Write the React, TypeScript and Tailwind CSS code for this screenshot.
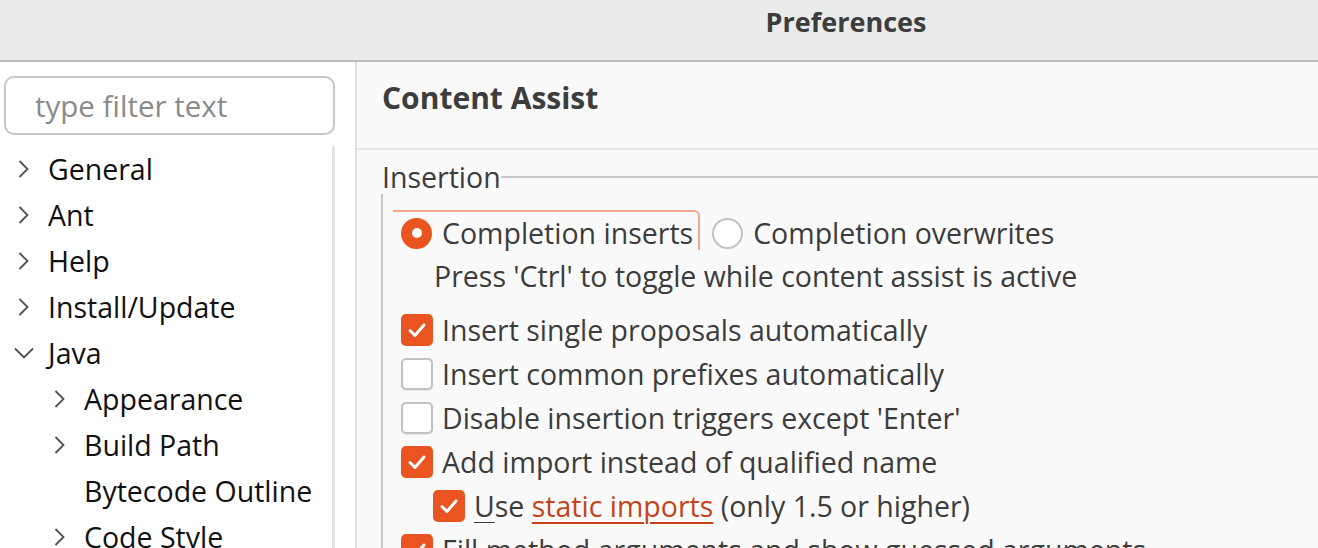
import React from "react";

function Chevron({ open }: { open?: boolean }) {
  return (
    <svg width="20" height="20" viewBox="0 0 20 20" className="shrink-0">
      <path
        d={open ? "M1 5.5 L10 14.5 L19 5.5" : "M5.5 2 L13.5 10 L5.5 18"}
        fill="none"
        stroke="#505050"
        strokeWidth="1.8"
      />
    </svg>
  );
}

function TreeRow({
  label,
  level = 0,
  chevron = "closed",
}: {
  label: string;
  level?: number;
  chevron?: "open" | "closed" | "none";
}) {
  return (
    <div
      className={`flex h-[46px] items-center ${level === 0 ? "pl-[14px]" : "pl-[50px]"}`}
    >
      <div className="mr-[14px] flex w-[20px] justify-center">
        {chevron !== "none" && <Chevron open={chevron === "open"} />}
      </div>
      <span className="text-[28.5px] leading-[36px] text-[#111] whitespace-nowrap">
        {label}
      </span>
    </div>
  );
}

function CheckBox({ checked }: { checked: boolean }) {
  return checked ? (
    <div className="flex h-[32px] w-[32px] shrink-0 items-center justify-center rounded-[5px] bg-[#e95420]">
      <svg width="32" height="32" viewBox="0 0 32 32">
        <path
          d="M9 16.5 L14 21.5 L23 11"
          fill="none"
          stroke="#fff"
          strokeWidth="3"
          strokeLinecap="round"
          strokeLinejoin="round"
        />
      </svg>
    </div>
  ) : (
    <div className="h-[32px] w-[32px] shrink-0 rounded-[5px] border-2 border-[#c2c2c2] bg-white shadow-[0_1px_1px_rgba(0,0,0,0.08)]" />
  );
}

function CheckRow({
  checked,
  nested,
  children,
}: {
  checked: boolean;
  nested?: boolean;
  children: React.ReactNode;
}) {
  return (
    <div className={`flex h-[44px] items-center gap-[9px] ${nested ? "pl-[32px]" : ""}`}>
      <CheckBox checked={checked} />
      <span className="text-[28.5px] leading-[36px] text-[#3c3c3c] whitespace-nowrap">
        {children}
      </span>
    </div>
  );
}

export default function App() {
  return (
    <div className="flex h-[548px] w-[1318px] flex-col overflow-hidden bg-white font-['Open_Sans','Noto_Sans',sans-serif]">
      {/* Title bar */}
      <div className="flex h-[62px] shrink-0 justify-center border-b-2 border-[#bdbdbd] bg-[#ebebeb] pl-[374px] pt-[5px]">
        <span className="text-[27px] font-bold leading-[34px] text-[#3d3d3d]">
          Preferences
        </span>
      </div>

      <div className="flex min-h-0 flex-1">
        {/* Left: filter + tree */}
        <div className="flex w-[357px] shrink-0 flex-col border-r-2 border-[#e0e0e0] bg-white">
          <div className="ml-[4px] mt-[14px] flex h-[59px] w-[331px] items-center rounded-[10px] border-2 border-[#c6c6c6] pl-[29px]">
            <span className="text-[29.5px] leading-[36px] text-[#8a8a8a]">
              type filter text
            </span>
          </div>
          <div className="mt-[11px] flex min-h-0 flex-1">
            <div className="w-[332px] shrink-0">
              <TreeRow label="General" />
              <TreeRow label="Ant" />
              <TreeRow label="Help" />
              <TreeRow label="Install/Update" />
              <TreeRow label="Java" chevron="open" />
              <TreeRow label="Appearance" level={1} />
              <TreeRow label="Build Path" level={1} />
              <TreeRow label="Bytecode Outline" level={1} chevron="none" />
              <TreeRow label="Code Style" level={1} />
            </div>
            <div className="w-[3px] shrink-0 bg-[#e3e3e3]" />
          </div>
        </div>

        {/* Right: page */}
        <div className="flex min-w-0 flex-1 flex-col bg-[#fafafa]">
          <div className="h-[88px] shrink-0 border-b-2 border-[#e2e2e2] pl-[25px] pt-[18px]">
            <span className="text-[30px] font-bold leading-[36px] text-[#3d3d3d]">
              Content Assist
            </span>
          </div>

          <div className="pl-[25px]">
            {/* Group label */}
            <div className="mt-[10px] flex h-[34px] items-center">
              <span className="text-[28.5px] leading-[34px] text-[#3c3c3c]">
                Insertion
              </span>
              <div className="h-[2px] flex-1 bg-[#c6c6c6]" />
            </div>

            {/* Group box */}
            <div className="-ml-[1px] border-l-2 border-[#c6c6c6] pl-[10px] pt-[16px]">
              <div className="flex h-[44px] items-start">
                <div className="flex h-[40px] items-center gap-[10px] rounded-tr-[6px] border-r-2 border-t-2 border-[#f2a68c] pl-[8px] pr-[5px] pt-[4px]">
                  <div className="flex h-[31px] w-[31px] shrink-0 items-center justify-center rounded-full bg-[#e95420]">
                    <div className="h-[10px] w-[10px] rounded-full bg-white" />
                  </div>
                  <span className="text-[28.5px] leading-[36px] text-[#3c3c3c] whitespace-nowrap">
                    Completion inserts
                  </span>
                </div>
                <div className="ml-[12px] flex h-[40px] items-center gap-[10px] pt-[6px]">
                  <div className="h-[31px] w-[31px] shrink-0 rounded-full border-2 border-[#c2c2c2] bg-white" />
                  <span className="text-[28.5px] leading-[36px] text-[#3c3c3c] whitespace-nowrap">
                    Completion overwrites
                  </span>
                </div>
              </div>

              <div className="flex h-[44px] items-center pl-[41px]">
                <span className="text-[28.5px] leading-[36px] text-[#3c3c3c] whitespace-nowrap">
                  Press 'Ctrl' to toggle while content assist is active
                </span>
              </div>

              <div className="mt-[10px] pl-[8px]">
                <CheckRow checked>Insert single proposals automatically</CheckRow>
                <CheckRow checked={false}>Insert common prefixes automatically</CheckRow>
                <CheckRow checked={false}>
                  Disable insertion triggers except 'Enter'
                </CheckRow>
                <CheckRow checked>Add import instead of qualified name</CheckRow>
                <CheckRow checked nested>
                  <span className="underline decoration-1 underline-offset-[5px]">U</span>
                  se{" "}
                  <span className="text-[#c4441a] underline decoration-[#c4441a] decoration-2 underline-offset-[5px]">
                    static imports
                  </span>{" "}
                  (only 1.5 or higher)
                </CheckRow>
                <CheckRow checked>Fill method arguments and show guessed arguments</CheckRow>
              </div>
            </div>
          </div>
        </div>
      </div>
    </div>
  );
}
